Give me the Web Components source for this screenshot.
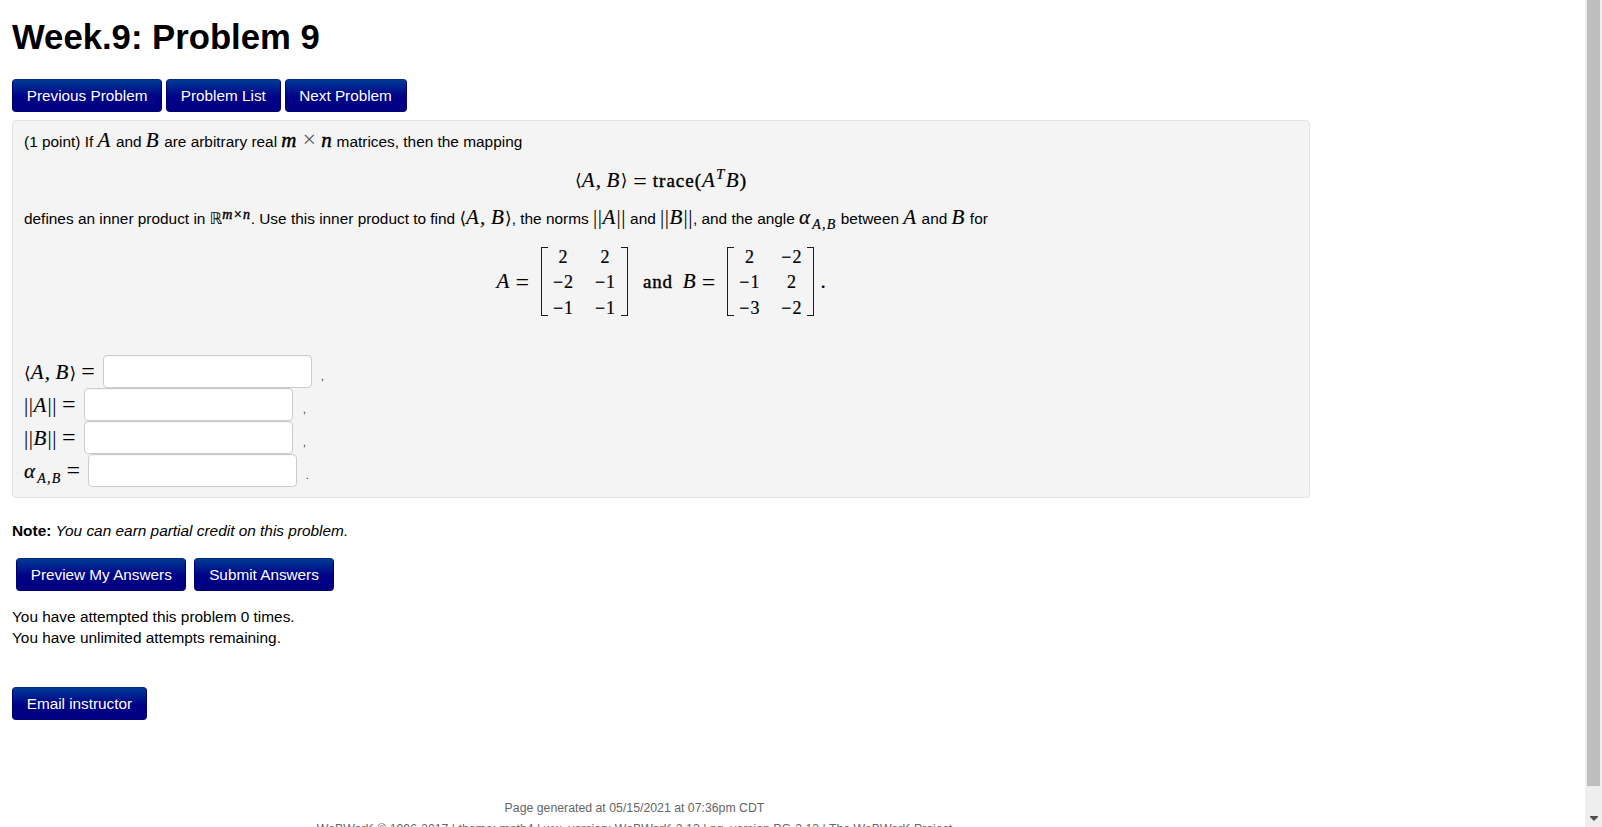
<!DOCTYPE html>
<html>
<head>
<meta charset="utf-8">
<title>Week.9: Problem 9</title>
<style>
  html, body { margin: 0; padding: 0; height: 100%; overflow: hidden; background: #fff; }
  body { display: flex; font-family: "Liberation Sans", Arial, sans-serif; font-size: 15.4px; color: #000; }
</style>
</head>
<body>
<ww-page>
  <h1 slot="title">Week.9: Problem 9</h1>
  <ww-nav slot="nav">
    <ww-button>Previous Problem</ww-button>
    <ww-button>Problem List</ww-button>
    <ww-button>Next Problem</ww-button>
  </ww-nav>
  <ww-problem slot="problem"></ww-problem>
  <ww-after slot="after"></ww-after>
  <ww-footer slot="footer"></ww-footer>
</ww-page>
<ww-scrollbar></ww-scrollbar>

<script>
const mathStyles = `
  .m { font-family: "Liberation Serif", "Times New Roman", serif; font-size: 21px; color: #000; white-space: nowrap; -webkit-text-stroke: 0.2px #000; }
  .i { font-style: italic; letter-spacing: 1.2px; word-spacing: -2px; }
  .b { font-style: italic; letter-spacing: 0.6px; -webkit-text-stroke: 0.45px #000; }
  .sup { font-size: 14px; vertical-align: 5px; line-height: 0; }
  .sub { font-size: 14px; vertical-align: -5px; line-height: 0; font-style: italic; letter-spacing: 1.2px; margin-left: 1px; }
  .op { font-style: normal; font-size: 24px; margin: 0 5px; line-height: 0; -webkit-text-stroke: 0; }
  .u { font-family: "DejaVu Sans", sans-serif; font-style: normal; font-size: 17px; -webkit-text-stroke: 0; }
  .bars { font-style: normal; font-size: 21px; letter-spacing: 0.5px; -webkit-text-stroke: 0; }
`;

class WwPage extends HTMLElement {
  constructor() {
    super();
    this.attachShadow({ mode: "open" }).innerHTML = `
      <style>
        :host { display: block; flex: 1; min-width: 0; padding: 0 0 0 12px; }
        ::slotted(h1) { margin: 0; padding-top: 17px; font-size: 34.7px; line-height: 40px; font-weight: bold; }
        ::slotted(ww-nav) { margin-top: 22px; }
        ::slotted(ww-problem) { margin-top: 8px; }
      </style>
      <slot name="title"></slot>
      <slot name="nav"></slot>
      <slot name="problem"></slot>
      <slot name="after"></slot>
      <slot name="footer"></slot>`;
  }
}

class WwNav extends HTMLElement {
  constructor() {
    super();
    this.attachShadow({ mode: "open" }).innerHTML = `
      <style>:host { display: flex; gap: 4px; }</style>
      <slot></slot>`;
  }
}

class WwButton extends HTMLElement {
  constructor() {
    super();
    this.attachShadow({ mode: "open" }).innerHTML = `
      <style>
        :host {
          display: inline-flex; align-items: center; justify-content: center;
          box-sizing: border-box; height: 33px; padding: 0 13.7px;
          border-radius: 4px; color: #fff; white-space: nowrap;
          background: linear-gradient(#003a94, #000087 55%, #00007f);
          border: 1px solid #00006e; border-top-color: #002a80;
          font-size: 15.3px;
        }
      </style>
      <slot></slot>`;
  }
}

class WwMatrix extends HTMLElement {
  constructor() {
    super();
    const rows = this.getAttribute("rows").split(";").map(r => r.split(","));
    const cells = rows.flat().map(c => `<span>${c.replace("-", "\u2212")}</span>`).join("");
    this.attachShadow({ mode: "open" }).innerHTML = `
      <style>
        :host { display: inline-block; position: relative; box-sizing: border-box; height: 69px; width: 87px; }
        .grid {
          display: grid; grid-template-columns: 42px 42px; grid-auto-rows: 25.5px;
          box-sizing: border-box; height: 69px; padding-top: 2px; justify-content: center; align-items: center;
          justify-items: center; align-content: center;
          font-family: "Liberation Serif", serif; font-size: 18px; letter-spacing: 1px;
          -webkit-text-stroke: 0.2px #000;
        }
        .br { position: absolute; top: 0; bottom: 0; width: 6px; border: 1.7px solid #1c1c1c; }
        .l { left: 0; border-right: 0; }
        .r { right: 0; border-left: 0; }
      </style>
      <span class="br l"></span>
      <div class="grid">${cells}</div>
      <span class="br r"></span>`;
  }
}

class WwAnswer extends HTMLElement {
  constructor() {
    super();
    this.attachShadow({ mode: "open" }).innerHTML = `
      <style>
        :host { display: flex; align-items: center; height: 33px; }
        .label { width: var(--label); flex: none; white-space: nowrap; padding-top: 2px; }
        input {
          box-sizing: border-box; width: 209px; height: 33px; margin: 0; padding: 0;
          border: 1px solid #ccc; border-radius: 4px; background: #fff;
          box-shadow: inset 0 1px 1px rgba(0,0,0,.04);
        }
        .end { margin-left: var(--end, 9px); font-size: 10px; position: relative; top: 5px; color: #222; }
      </style>
      <span class="label"><slot></slot></span>
      <input type="text">
      <span class="end">${this.getAttribute("end") || ","}</span>`;
  }
}

const problemTemplate = document.createElement("template");
problemTemplate.innerHTML = `
  <style>
    ${mathStyles}
    :host {
      display: block; box-sizing: border-box; width: 1298px; height: 378px;
      padding: 9px 11px; background: #f4f4f4;
      border: 1px solid #e3e3e3; border-radius: 4px; line-height: 21px;
    }
    p { margin: 0; white-space: nowrap; height: 21px; }
    .eq { display: flex; justify-content: center; align-items: center; height: 21px; margin-top: 19px; }
    .eq .op { margin: 0 6px; }
    .eq .sup { font-size: 15px; position: relative; top: -7px; }
    .second { margin-top: 16px; }
    .matrices { display: flex; justify-content: center; align-items: center; height: 69px; margin-top: 19px; }
    .answers { margin-top: 39px; }
    .bb { font-family: "DejaVu Sans", sans-serif; font-size: 16px; font-style: normal; -webkit-text-stroke: 0; }
    ww-matrix { margin: 0 6px 0 7px; }
    .and { font-style: normal; font-size: 19px; letter-spacing: 0.8px; -webkit-text-stroke: 0.4px #000; margin: 0 10px 0 9px; }
    .trace { font-style: normal; font-size: 19px; letter-spacing: 1px; -webkit-text-stroke: 0.4px #000; }
    .times { font-style: normal; font-size: 24px; line-height: 0; color: #555; -webkit-text-stroke: 0; margin: 0 1px; }
  </style>
  <p>(1 point) If <span class="m i">A</span> and <span class="m i">B</span> are arbitrary real <span class="m b">m</span> <span class="m times">×</span> <span class="m b">n</span> matrices, then the mapping</p>
  <div class="eq m"><span class="u">⟨</span><span class="i">A, B</span><span class="u">⟩</span><span class="op">=</span><span class="trace">trace(</span><span class="i">A</span><span class="sup i">T</span><span class="i">B</span><span class="trace">)</span></div>
  <p class="second">defines an inner product in <span class="m bb">ℝ</span><span class="m sup b">m×n</span>. Use this inner product to find <span class="m"><span class="u">⟨</span><span class="i">A, B</span><span class="u">⟩</span></span>, the norms <span class="m"><span class="bars">||</span><span class="i">A</span><span class="bars">||</span></span> and <span class="m"><span class="bars">||</span><span class="i">B</span><span class="bars">||</span></span>, and the angle <span class="m i">α</span><span class="m sub">A,B</span> between <span class="m i">A</span> and <span class="m i">B</span> for</p>
  <div class="matrices m">
    <span class="i">A</span><span class="op">=</span>
    <ww-matrix rows="2,2;-2,-1;-1,-1"></ww-matrix>
    <span class="and">and</span>
    <span class="i">B</span><span class="op">=</span>
    <ww-matrix rows="2,-2;-1,2;-3,-2"></ww-matrix>
    <span>.</span>
  </div>
  <div class="answers">
    <ww-answer style="--label:79px"><span class="m"><span class="u">⟨</span><span class="i">A, B</span><span class="u">⟩</span><span class="op">=</span></span></ww-answer>
    <ww-answer style="--label:60px;--end:10px"><span class="m"><span class="bars">||</span><span class="i">A</span><span class="bars">||</span><span class="op">=</span></span></ww-answer>
    <ww-answer style="--label:60px;--end:10px"><span class="m"><span class="bars">||</span><span class="i">B</span><span class="bars">||</span><span class="op">=</span></span></ww-answer>
    <ww-answer style="--label:64px" end="."><span class="m"><span class="i">α</span><span class="sub">A,B</span><span class="op">=</span></span></ww-answer>
  </div>`;

class WwProblem extends HTMLElement {
  constructor() {
    super();
    this.attachShadow({ mode: "open" }).append(problemTemplate.content.cloneNode(true));
  }
}

class WwAfter extends HTMLElement {
  constructor() {
    super();
    this.attachShadow({ mode: "open" }).innerHTML = `
      <style>
        :host { display: block; line-height: 21px; }
        p { margin: 0; }
        .note { margin-top: 22px; }
        .actions { display: flex; gap: 8px; margin: 17px 0 0 4px; }
        .attempts { margin-top: 15px; }
        .email { margin-top: 39px; }
      </style>
      <p class="note"><b>Note:</b> <i>You can earn partial credit on this problem.</i></p>
      <div class="actions">
        <ww-button>Preview My Answers</ww-button>
        <ww-button>Submit Answers</ww-button>
      </div>
      <p class="attempts">You have attempted this problem 0 times.<br>You have unlimited attempts remaining.</p>
      <div class="email"><ww-button>Email instructor</ww-button></div>`;
  }
}

class WwFooter extends HTMLElement {
  constructor() {
    super();
    this.attachShadow({ mode: "open" }).innerHTML = `
      <style>
        :host { display: block; margin-top: 79px; width: 1245px; text-align: center; font-size: 12.3px; line-height: 19px; color: #666; white-space: nowrap; }
        .line2 { margin-top: 2px; }
      </style>
      <div>Page generated at 05/15/2021 at 07:36pm CDT</div>
      <div class="line2">WeBWorK © 1996-2017 | theme: math4 | ww_version: WeBWorK-2.13 | pg_version PG-2.13 | The WeBWorK Project</div>`;
  }
}

class WwScrollbar extends HTMLElement {
  constructor() {
    super();
    this.attachShadow({ mode: "open" }).innerHTML = `
      <style>
        :host { display: flex; flex-direction: column; flex: none; box-sizing: border-box; width: 17px; height: 827px; padding: 0 2px; background: #eee; }
        .thumb { height: 786px; background: #bebebe; }
        .track { flex: 1; display: flex; align-items: flex-end; justify-content: center; padding-bottom: 6px; }
        svg { display: block; }
      </style>
      <div class="thumb"></div>
      <div class="track"><svg width="8" height="5" viewBox="0 0 8 5"><path d="M0 0h8v1L4 5 0 1z" fill="#505050"/></svg></div>`;
  }
}

customElements.define("ww-page", WwPage);
customElements.define("ww-nav", WwNav);
customElements.define("ww-button", WwButton);
customElements.define("ww-matrix", WwMatrix);
customElements.define("ww-answer", WwAnswer);
customElements.define("ww-problem", WwProblem);
customElements.define("ww-after", WwAfter);
customElements.define("ww-footer", WwFooter);
customElements.define("ww-scrollbar", WwScrollbar);
</script>
</body>
</html>
